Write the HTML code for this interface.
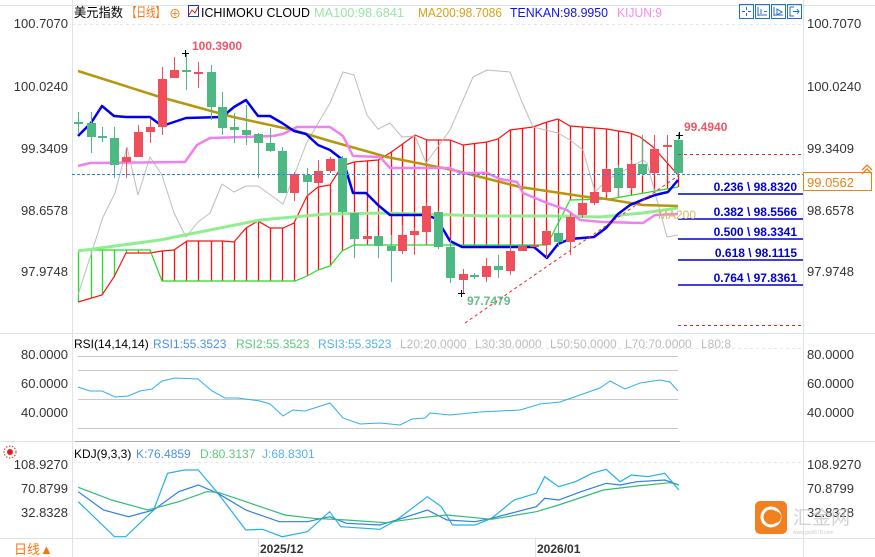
<!DOCTYPE html>
<html><head><meta charset="utf-8"><style>
body{margin:0;width:875px;height:557px;overflow:hidden;background:#fff;font-family:"Liberation Sans","Noto Sans CJK SC",sans-serif;}
svg{position:absolute;left:0;top:0}
text{font-family:"Liberation Sans","Noto Sans CJK SC",sans-serif;}
</style></head><body>
<svg id="s" width="875" height="557" viewBox="0 0 875 557">
<g stroke="#dde3ea" stroke-width="1" fill="none">
<line x1="72.5" y1="0" x2="72.5" y2="557"/>
<line x1="803.5" y1="0" x2="803.5" y2="557"/>
<line x1="0" y1="333.5" x2="875" y2="333.5"/>
<line x1="0" y1="441.5" x2="875" y2="441.5"/>
<line x1="0" y1="538.5" x2="875" y2="538.5"/>
<line x1="0" y1="5.5" x2="875" y2="5.5"/>
<line x1="72" y1="24.5" x2="803" y2="24.5" stroke-dasharray="3,3" stroke="#e6e6e6"/>
<line x1="72" y1="348.5" x2="803" y2="348.5" stroke-dasharray="3,3" stroke="#e6e6e6"/>
<line x1="72" y1="462.5" x2="803" y2="462.5" stroke-dasharray="3,3" stroke="#e6e6e6"/>
<line x1="258.5" y1="538" x2="258.5" y2="557"/>
<line x1="535.5" y1="538" x2="535.5" y2="557"/>
</g>
<g id="cloud"></g>
<g id="lines" fill="none" stroke-linejoin="round">
<polyline stroke="#bcbcbc" stroke-width="1" points="78,295 103,217 115,193 127,147 138,195 150,157 162,175 174,213 186,237 198,222 210,213 222,184 234,192 246,186 258,186 283,204 307,142 330,103 343,72 354,75 367,115 378,129 390,123 402,137 415,136 426,163 450,130 473,77 487,70 510,72 522,102 533,127 558,133 570,140 583,150 595,192 607,180 643,160 647,163 667,237 678,235"/>
<polyline stroke="#90ee90" stroke-width="3" points="78,251 160,240 260,220 327,214 387,213 487,216 553,216 600,217 643,213 678,208"/>
<polyline stroke="#b8960c" stroke-width="2.5" points="78,71 160,97 233,117 293,130 330,141 387,157 453,170 520,187 587,197 600,198 643,205 678,206"/>
<polyline stroke="#f080f0" stroke-width="2.5" points="78,166 90,163 185,162 197,145 210,138 273,136 283,134 297,127 330,127 343,136 353,156 380,157 390,168 450,168 460,173 487,173 500,179 517,182 523,193 547,203 567,210 580,220 603,222 643,223 655,215 678,214"/>
<polyline stroke="#0000ee" stroke-width="2.5" points="78,136 91,123 102,106 114,116 126,117 150,117 162,126 174,122 186,118 222,117 234,107 246,100 258,116 270,116 282,123 294,131 306,134 318,145 330,150 343,160 353,193 366,193 378,205 390,215 426,215 437,219 450,241 462,247 534,247 547,258 558,244 570,239 594,237 606,228 618,214 630,205 642,200 655,195 668,192 678,180"/>
</g>
<g id="candles"></g>
<line x1="72" y1="174.5" x2="803" y2="174.5" stroke="#2288ee" stroke-dasharray="3,2"/>
<line x1="678" y1="154.5" x2="803" y2="154.5" stroke="#ee2222" stroke-dasharray="3,3"/>
<line x1="678" y1="325.5" x2="803" y2="325.5" stroke="#ee2222" stroke-dasharray="3,3"/>
<line x1="465" y1="323" x2="678" y2="176" stroke="#ee2222" stroke-dasharray="3,3"/>
<g stroke="#0000cc" stroke-width="1.5">
<line x1="678" y1="194" x2="803" y2="194"/><line x1="678" y1="219" x2="803" y2="219"/>
<line x1="678" y1="239" x2="803" y2="239"/><line x1="678" y1="260" x2="803" y2="260"/>
<line x1="678" y1="285" x2="803" y2="285"/>
</g>
<g font-size="12" font-weight="bold" fill="#0000cc" text-anchor="end">
<text x="797" y="191">0.236 \ 98.8320</text><text x="797" y="216">0.382 \ 98.5566</text>
<text x="797" y="236">0.500 \ 98.3341</text><text x="797" y="257">0.618 \ 98.1115</text>
<text x="797" y="282">0.764 \ 97.8361</text>
</g>
<text x="192" y="50" font-size="12" font-weight="bold" fill="#ee5566">100.3900</text>
<text x="684" y="131" font-size="12" font-weight="bold" fill="#ee5566">99.4940</text>
<text x="467" y="305" font-size="12" font-weight="bold" fill="#66bb88">97.7479</text>
<text x="658" y="219" font-size="12" fill="#d0c060">MA200</text>
<g stroke="#000" stroke-width="1"><line x1="182" y1="53.5" x2="189" y2="53.5"/><line x1="185.5" y1="50" x2="185.5" y2="57"/>
<line x1="676" y1="135.5" x2="683" y2="135.5"/><line x1="679.5" y1="132" x2="679.5" y2="139"/>
<line x1="458" y1="293.5" x2="465" y2="293.5"/><line x1="461.5" y1="290" x2="461.5" y2="297"/></g>
<g font-size="13" fill="#333">
<g text-anchor="end"><text x="68" y="28">100.7070</text><text x="68" y="91">100.0240</text><text x="68" y="153">99.3409</text><text x="68" y="215">98.6578</text><text x="68" y="276">97.9748</text>
<text x="68" y="359">80.0000</text><text x="68" y="388">60.0000</text><text x="68" y="417">40.0000</text>
<text x="68" y="469">108.9270</text><text x="68" y="493">70.8799</text><text x="68" y="517">32.8328</text></g>
<text x="807" y="28">100.7070</text><text x="807" y="91">100.0240</text><text x="807" y="153">99.3409</text><text x="807" y="215">98.6578</text><text x="807" y="276">97.9748</text>
<text x="807" y="359">80.0000</text><text x="807" y="388">60.0000</text><text x="807" y="417">40.0000</text>
<text x="807" y="469">108.9270</text><text x="807" y="493">70.8799</text><text x="807" y="517">32.8328</text>
</g>
<rect x="803.5" y="172.5" width="68" height="18" fill="#fff" stroke="#f08010"/>
<text x="807" y="187" font-size="13" fill="#f08010">99.0562</text>
<path d="M862 170 l5 -5 l5 5 M862 174 l5 -5 l5 5" stroke="#f08010" fill="none" stroke-width="1.3"/>
<g font-size="13">
<text x="74" y="17" fill="#000" textLength="49" lengthAdjust="spacingAndGlyphs">美元指数</text>
<text x="127" y="17" fill="#f07810" textLength="38" lengthAdjust="spacingAndGlyphs">【日线】</text>
<text x="169" y="18" fill="#f07810" font-size="12">⊕</text>
<rect x="188.5" y="5.5" width="10" height="11" fill="#fff" stroke="#1a3aa0"/>
<path d="M189 15 l3 -5 l3 3 l3 -6" stroke="#e02020" fill="none"/>
<text x="201" y="17" fill="#000" textLength="109" lengthAdjust="spacingAndGlyphs">ICHIMOKU CLOUD</text>
<text x="314" y="17" fill="#99e6a6" textLength="90" lengthAdjust="spacingAndGlyphs">MA100:98.6841</text>
<text x="418" y="17" fill="#d4a017" textLength="84" lengthAdjust="spacingAndGlyphs">MA200:98.7086</text>
<text x="510" y="17" fill="#1010ee" textLength="98" lengthAdjust="spacingAndGlyphs">TENKAN:98.9950</text>
<text x="617" y="17" fill="#f68cf0" textLength="45" lengthAdjust="spacingAndGlyphs">KIJUN:9</text>
</g>
<g stroke="#1d6fd0" fill="none" stroke-width="1">
<rect x="739.5" y="4.5" width="14" height="14"/><rect x="755.5" y="4.5" width="14" height="14"/>
<rect x="771.5" y="4.5" width="14" height="14"/><rect x="787.5" y="4.5" width="14" height="14"/>
<path d="M746.5 7v3M746.5 13v3M742 11.5h3M748 11.5h3"/>
<path d="M758 7v9M758 15h9M761 9v5M764 11.5h3"/>
<path d="M774 7v9M774 15h9M777 9l5 3l-5 3z"/>
<path d="M790 7v9h4M790 7h4M793 11.5h6M797 9l2 2.5l-2 2.5"/>
</g>
<g stroke="#c8c8c8"><line x1="78" y1="356.5" x2="678" y2="356.5"/><line x1="78" y1="370.5" x2="678" y2="370.5"/><line x1="78" y1="399.5" x2="678" y2="399.5"/><line x1="78" y1="428.5" x2="678" y2="428.5"/></g>
<g font-size="12"><text x="74" y="348" fill="#000">RSI(14,14,14)</text><text x="153" y="348" fill="#4a90e2">RSI1:55.3523</text><text x="236" y="348" fill="#5dc77d">RSI2:55.3523</text><text x="318" y="348" fill="#55b2e8">RSI3:55.3523</text><text x="400" y="348" fill="#bbb">L20:20.0000</text><text x="475" y="348" fill="#bbb">L30:30.0000</text><text x="550" y="348" fill="#bbb">L50:50.0000</text><text x="625" y="348" fill="#bbb">L70:70.0000</text><text x="701" y="348" fill="#bbb">L80:8</text></g>
<polyline fill="none" stroke="#30b0e8" stroke-width="1" points="78,387 90,391 102,391 115,397 128,396 140,391 152,389 162,381 175,378 198,379 212,391 225,398 238,398 260,401 270,404 283,416 293,410 305,411 330,403 343,418 360,424 380,423 400,425 412,419 425,418 430,413 450,415 480,412 500,411 520,410 540,404 560,402 580,395 600,388 610,381 625,389 640,383 660,380 670,382 678,391"/>
<line x1="75" y1="441.5" x2="680" y2="441.5" stroke="#aaa"/>
<g font-size="12"><text x="74" y="458" fill="#000">KDJ(9,3,3)</text><text x="136" y="458" fill="#4a90e2">K:76.4859</text><text x="200" y="458" fill="#5dc77d">D:80.3137</text><text x="262" y="458" fill="#55b2e8">J:68.8301</text></g>
<circle cx="10" cy="452" r="3" fill="#e02020"/><circle cx="10" cy="452" r="6" fill="none" stroke="#e02020" stroke-dasharray="1.5,1.5"/>
<g fill="none" stroke-width="1.2">
<polyline id="kj" stroke="#22b0e8"/>
<polyline id="kk" stroke="#2f7fe0"/>
<polyline id="kd" stroke="#30bb77"/>
</g>
<rect x="755" y="501" width="32" height="33" rx="5" fill="#f08020"/>
<circle cx="771" cy="517" r="9" fill="none" stroke="#fff" stroke-width="3"/>
<circle cx="775" cy="517" r="6" fill="#f08020"/>
<text x="793" y="524" font-size="19" fill="#c8c8c8" opacity="0.8">汇金网</text>
<text x="793" y="534" font-size="5" fill="#ccc">www.gold678.com</text>
<text x="14" y="554" font-size="13" fill="#f07810">日线▲</text>
<text x="260" y="553" font-size="12" font-weight="bold" fill="#333">2025/12</text>
<text x="537" y="553" font-size="12" font-weight="bold" fill="#333">2026/01</text>
</svg>
<script>
var NS="http://www.w3.org/2000/svg";
function el(p,t,a){var e=document.createElementNS(NS,t);for(var k in a)e.setAttribute(k,a[k]);p.appendChild(e);return e;}
var C=[[78,123,123,112,133,'g'],[91,123,137,112,153,'g'],[102,137,137,127,142,'g'],[114,138,165,127,178,'g'],[126,157,162,148,178,'r'],[138,132,157,125,157,'r'],[150,127,132,119,143,'r'],[162,79,127,67,135,'r'],[174,70,78,57,78,'r'],[186,71,72,53,90,'g'],[198,72,74,62,88,'r'],[211,72,107,65,120,'g'],[222,107,128,92,135,'g'],[234,127,130,113,143,'g'],[246,130,135,105,145,'g'],[258,134,143,133,178,'g'],[270,143,151,128,152,'g'],[282,151,193,147,193,'g'],[294,174,193,172,201,'r'],[307,175,182,168,196,'g'],[318,171,183,160,187,'r'],[330,159,171,157,173,'r'],[342,158,212,156,214,'g'],[354,213,239,213,258,'g'],[367,236,239,236,240,'r'],[378,236,246,236,258,'g'],[391,246,251,235,282,'g'],[402,235,251,225,254,'r'],[414,231,235,228,255,'r'],[426,206,232,203,245,'r'],[438,212,247,211,249,'g'],[450,247,278,240,283,'g'],[463,274,280,269,293,'r'],[474,276,277,273,279,'g'],[486,266,277,258,282,'r'],[498,266,270,255,278,'g'],[510,251,271,246,275,'r'],[522,246,251,246,251,'r'],[534,245,247,245,247,'r'],[546,231,245,230,258,'r'],[558,233,242,213,247,'g'],[570,217,242,213,255,'r'],[582,203,215,200,218,'r'],[594,192,203,189,205,'r'],[606,169,192,168,195,'r'],[618,168,188,165,198,'g'],[631,164,188,160,190,'r'],[642,164,174,135,176,'g'],[654,149,173,135,175,'r'],[667,145,147,135,163,'r'],[678,140,173,133,175,'g']];
var cg=document.getElementById('candles');
C.forEach(function(c){var col=c[5]=='r'?'#ef4f5c':'#4db882';var t=Math.min(c[1],c[2]),b=Math.max(c[1],c[2]);
el(cg,'line',{x1:c[0]+.5,x2:c[0]+.5,y1:c[3],y2:c[4],stroke:col});
if(b-t<2){el(cg,'rect',{x:c[0]-4,y:t-1,width:9,height:2,fill:col});}else el(cg,'rect',{x:c[0]-4,y:t,width:9,height:b-t,fill:col});});
var A=[[78,302],[102,295],[114,277],[126,253],[150,253],[162,251],[174,250],[187,241],[223,241],[234,242],[246,228],[258,221],[270,228],[283,228],[294,223],[307,196],[318,187],[330,185],[342,166],[354,162],[378,160],[390,153],[415,135],[427,140],[450,140],[463,145],[487,142],[498,139],[510,130],[533,127],[547,122],[558,119],[570,126],[607,129],[630,133],[640,137],[653,147],[678,175]];
var B=[[78,250],[150,250],[162,281],[295,281],[307,276],[318,270],[330,266],[342,251],[354,245],[547,245],[570,200],[610,199],[678,187]];
function interp(P,x){for(var i=0;i<P.length-1;i++){if(x>=P[i][0]&&x<=P[i+1][0]){var f=(x-P[i][0])/(P[i+1][0]-P[i][0]);return P[i][1]+f*(P[i+1][1]-P[i][1]);}}return P[P.length-1][1];}
var cl=document.getElementById('cloud');
C.forEach(function(c){var x=c[0]+.5,a=interp(A,c[0]),b=interp(B,c[0]);el(cl,'line',{x1:x,x2:x,y1:a,y2:b,stroke:b<a?'#22dd22':'#ff1010','stroke-width':1.3});});
el(cl,'polyline',{points:A.map(function(p){return p.join(',')}).join(' '),fill:'none',stroke:'#ff1010','stroke-width':1.2});
el(cl,'polyline',{points:B.map(function(p){return p.join(',')}).join(' '),fill:'none',stroke:'#22dd22','stroke-width':1.2});
function cv(a){return a.map(function(p){return (p[0]/1.79).toFixed(1)+','+(430+p[1]/3).toFixed(1)}).join(' ');}
document.getElementById('kj').setAttribute('points',cv([[140,215],[205,320],[225,320],[275,240],[300,130],[330,120],[355,120],[390,190],[440,300],[470,298],[505,320],[550,305],[590,245],[610,290],[680,298],[710,270],[765,200],[790,230],[810,285],[850,285],[880,265],[920,210],[960,190],[975,140],[1000,170],[1030,155],[1060,130],[1085,118],[1110,155],[1130,135],[1160,140],[1190,130],[1200,150],[1215,180]]));
document.getElementById('kk').setAttribute('points',cv([[140,185],[185,240],[230,260],[275,240],[320,185],[355,165],[390,190],[440,240],[500,275],[550,275],[590,260],[620,280],[680,285],[720,265],[765,240],[800,270],[850,275],[880,265],[960,230],[975,205],[1000,210],[1040,185],[1085,160],[1110,165],[1140,155],[1190,150],[1215,165]]));
document.getElementById('kd').setAttribute('points',cv([[140,172],[200,210],[265,240],[320,215],[370,185],[390,187],[440,215],[510,255],[560,265],[620,270],[690,278],[760,262],[800,255],[880,268],[960,245],[1000,225],[1080,180],[1140,168],[1200,158],[1215,165]]));
</script>
</body></html>
